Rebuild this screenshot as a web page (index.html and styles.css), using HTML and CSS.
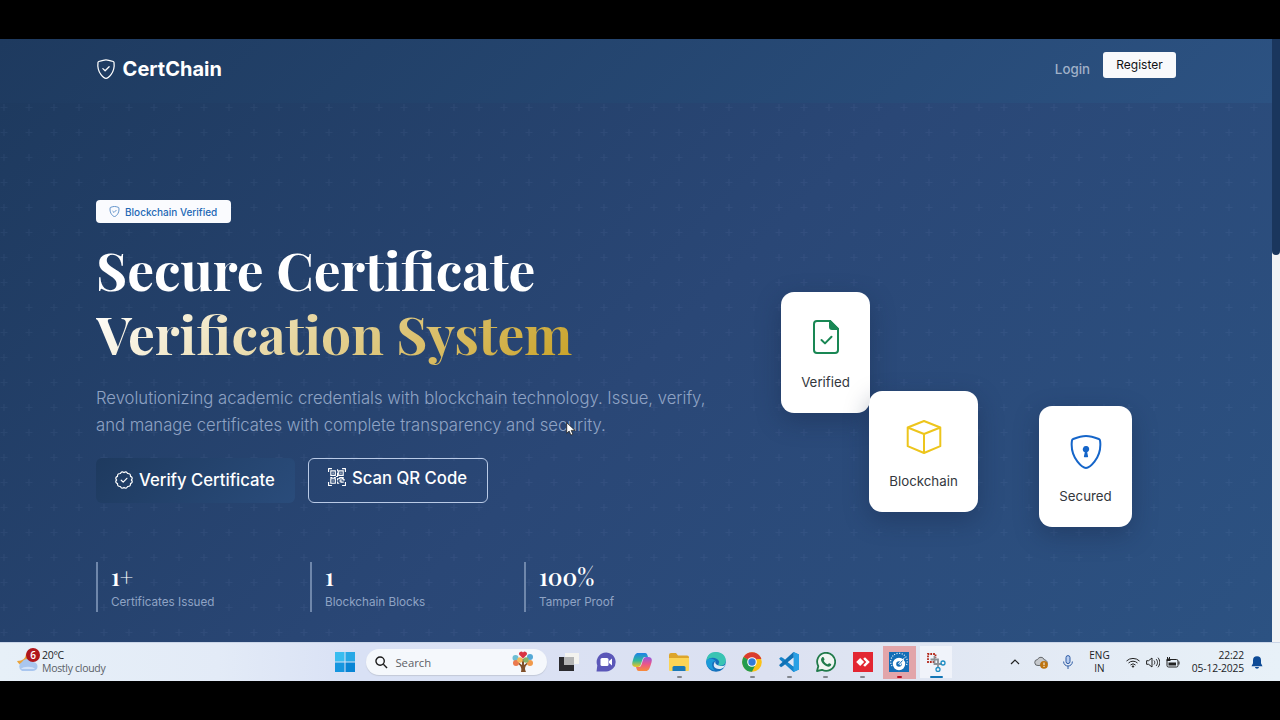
FILE: index.html
```
<!DOCTYPE html>
<html lang="en">
  <head>
    <meta charset="UTF-8" />
    <meta name="viewport" content="width=device-width, initial-scale=1.0" />
    <title>CertChain</title>
    <link rel="stylesheet" href="styles.css" />
  </head>
  <body>
    <svg class="defs" width="0" height="0">
      <defs>
        <symbol id="shield-check" viewBox="0 0 16 16">
          <path d="M8 .6C6.7.6 4 1.4 2.2 2 1.900 2.100 1.700 2.300 1.600 2.700 1 7.200 2.400 10.400 4 12.500c1.400 1.800 3.200 2.900 4 2.900s2.600-1.100 4-2.900c1.600-2.100 3-5.300 2.400-9.800-.1-.4-.3-.6-.6-.7C12 1.400 9.300.6 8 .6z" fill="none" stroke="currentColor" />
          <path d="M5.500 7.700l1.800 1.700 3.200-3.200" fill="none" stroke="currentColor" stroke-linecap="round" stroke-linejoin="round" />
        </symbol>
      </defs>
    </svg>

    <div class="screen">
      <div class="viewport">
        <div class="page">
          <nav class="navbar">
            <div class="brand">
              <svg><use href="#shield-check" /></svg>
              <span>CertChain</span>
            </div>
            <div class="nav-links">
              <a class="login">Login</a>
              <a class="register">Register</a>
            </div>
          </nav>

          <main class="hero">
            <section class="hero-text">
              <div class="badge">
                <svg><use href="#shield-check" /></svg>
                <span>Blockchain Verified</span>
              </div>
              <h1>
                <span class="line">Secure Certificate</span>
                <span class="line gold">Verification System</span>
              </h1>
              <p class="lead">
                Revolutionizing academic credentials with blockchain technology. Issue, verify,<br />
                and manage certificates with complete transparency and security.
              </p>
              <div class="buttons">
                <a class="btn btn-verify">
                  <svg viewBox="0 0 18 18" fill="none" stroke="currentColor" stroke-width="1.2" stroke-linecap="round" stroke-linejoin="round">
                    <path d="M9 1.600Q11.300-.4 12.600 2.500 15.700 2.300 15.500 5.400 18.400 6.700 16.400 9 18.400 11.300 15.500 12.600 15.700 15.700 12.600 15.500 11.300 18.400 9 16.400 6.700 18.400 5.400 15.500 2.300 15.700 2.500 12.600-.4 11.300 1.600 9-.4 6.700 2.500 5.400 2.300 2.300 5.400 2.500 6.700-.4 9 1.600z" />
                    <path d="M6.200 9.200l2 1.900 3.700-3.800" />
                  </svg>
                  <span>Verify Certificate</span>
                </a>
                <a class="btn btn-scan">
                  <svg viewBox="0 0 16 16" fill="currentColor">
                    <path d="M0 .5A.5.5 0 0 1 .5 0h3v1H1v2.500H0zM12.500 0h3a.5.5 0 0 1 .5.5v3h-1V1h-2.500zM0 12.500h1V15h2.500v1h-3a.5.5 0 0 1-.5-.5zM15 12.500h1v3a.5.5 0 0 1-.5.5h-3v-1H15z" />
                    <path fill-rule="evenodd" d="M2 2h5v5H2zm1 1v3h3V3zM9 2h5v5H9zm1 1v3h3V3zM2 9h5v5H2zm1 1v3h3v-3z" />
                    <path d="M4 4h1v1H4zM11 4h1v1h-1zM4 11h1v1H4zM8 1h1v2H8zM8 4h1v4H7V7h1zM2 8h2v1H2zM5 8h2v1H5zM8 9h2V8h1v2H9v1H8zM12 8h2v2h-2V9h-1V8zM11 10h1v2h2v1h-3v-1h-1v-1h1zM8 12h1v1h1v1H8zM13 10h2v1h-2z" />
                  </svg>
                  <span>Scan QR Code</span>
                </a>
              </div>
              <div class="stats">
                <div class="stat"><strong>1+</strong><span>Certificates Issued</span></div>
                <div class="stat"><strong>1</strong><span>Blockchain Blocks</span></div>
                <div class="stat"><strong>100%</strong><span>Tamper Proof</span></div>
              </div>
            </section>

            <section class="hero-visual">
              <div class="card card-verified">
                <svg viewBox="0 0 32 34" fill="none" stroke="#198754" stroke-width="2" stroke-linecap="round" stroke-linejoin="round">
                  <path d="M20 1H7a3 3 0 0 0-3 3v26a3 3 0 0 0 3 3h18a3 3 0 0 0 3-3V9z" />
                  <path d="M20 1v6a2 2 0 0 0 2 2h6z" fill="#198754" />
                  <path d="M11.500 20l3.500 3.400 6.500-6.600" />
                </svg>
                <span>Verified</span>
              </div>
              <div class="card card-blockchain">
                <svg viewBox="0 0 36 34" fill="none" stroke="#edc51c" stroke-width="2" stroke-linejoin="round">
                  <path d="M18 1l16.300 6.500v18.700L18 33 1.700 26.200V7.500zM1.700 7.500L18 14l16.300-6.500M18 14v19" />
                </svg>
                <span>Blockchain</span>
              </div>
              <div class="card card-secured">
                <svg viewBox="0 0 32 34">
                  <path d="M16 1C12.500 1 6.500 2.700 3.200 4 2.400 4.300 2 5 1.900 5.800.8 14.800 3.800 22 7.500 26.700 10.500 30.500 14.300 33 16 33s5.500-2.500 8.500-6.300C28.200 22 31.200 14.800 30.100 5.800 30 5 29.600 4.300 28.800 4 25.500 2.700 19.500 1 16 1z" fill="none" stroke="#1565c9" stroke-width="2" />
                  <path d="M19.200 14.200a3.200 3.200 0 1 0-4.400 3l-.9 4.300c-.1.500.2.800.6.800h3c.4 0 .7-.3.6-.8l-.9-4.300a3.200 3.200 0 0 0 2-3z" fill="#1565c9" />
                </svg>
                <span>Secured</span>
              </div>
            </section>
          </main>
        </div>
        <div class="scrollbar"><div class="thumb"></div></div>
      </div>

      <footer class="taskbar">
        <div class="weather">
          <svg class="weather-icon" viewBox="0 0 26 26">
            <path d="M10 5c0 5-3 8-9 8 2 5 9 6 12 1l3-5z" fill="#eaa43c" />
            <path d="M6 23a5 5 0 0 1 0-9c2-4 9-4 11 0 6 0 6 9 0 9z" fill="#a9c6ef" />
            <path d="M5 21h14c-2-3-12-3-14 0z" fill="#d3e3fa" />
            <circle cx="17" cy="7" r="7" fill="#b0161b" />
            <text x="17" y="10.800" text-anchor="middle">6</text>
          </svg>
          <div class="weather-text"><span>20°C</span><small>Mostly cloudy</small></div>
        </div>

        <div class="apps">
          <div class="app">
            <svg viewBox="0 0 20 20"><path d="M0 0h9.500v9.500H0z" fill="#39bdf0" /><path d="M10.500 0H20v9.500h-9.500z" fill="#27a8e6" /><path d="M0 10.500h9.500V20H0z" fill="#1696df" /><path d="M10.500 10.500H20V20h-9.500z" fill="#0885d5" /></svg>
          </div>
          <div class="search">
            <svg class="lens" viewBox="0 0 14 14"><circle cx="5.500" cy="5.500" r="4.500" /><path d="M9 9l4 4" /></svg>
            <span>Search</span>
            <svg class="tree" viewBox="0 0 22 22">
              <path d="M9 21c1-4 0-6-4-9l1-1 4 3V8h2v6l4-3 1 1c-4 3-5 5-3 9z" fill="#80502b" />
              <circle cx="3.500" cy="7" r="3" fill="#6dbed3" /><circle cx="18" cy="6" r="3" fill="#54a9d6" />
              <circle cx="4" cy="12" r="3" fill="#eb7a4e" /><circle cx="18" cy="12" r="3" fill="#f19a4b" />
              <circle cx="8" cy="9" r="2.800" fill="#f5ba5a" /><circle cx="14" cy="9" r="2.800" fill="#87b36a" />
              <path d="M11 7.500L7.500 4A2 2 0 0 1 11 1.500 2 2 0 0 1 14.500 4z" fill="#d93343" />
            </svg>
          </div>
          <div class="app">
            <svg viewBox="0 0 20 20"><path d="M6 1h14v11H6z" fill="#f3f3ef" /><path d="M0 5h15v14H0z" fill="#2b2b2e" /><path d="M5 5h10v8H5z" fill="#b3b4b4" /></svg>
          </div>
          <div class="app">
            <svg viewBox="0 0 20 20"><path d="M.5 19.500l.8-6A9.500 9.500 0 1 1 10 19.500z" fill="#5b57b8" /><rect x="4.500" y="6" width="8" height="8" rx="1.500" fill="#fff" /><path d="M13 9l3-2.500v7L13 11z" fill="#fff" /></svg>
          </div>
          <div class="app">
            <svg viewBox="0 0 20 20">
              <defs>
                <linearGradient id="cop1" x1="0" y1="0" x2="0" y2="1"><stop stop-color="#1c82e8" /><stop offset=".55" stop-color="#31b99a" /><stop offset="1" stop-color="#f3c520" /></linearGradient>
                <linearGradient id="cop2" x1="0" y1="0" x2="0" y2="1"><stop stop-color="#8e58e2" /><stop offset=".5" stop-color="#eb558b" /><stop offset="1" stop-color="#f78c38" /></linearGradient>
              </defs>
              <path d="M6 1h7c2 0 2 1 3 4h-3c-2 0-2 1-4 7-1 3-2 3-5 3-5 0-4-4-3-7C2.500 3 3.500 1 6 1z" fill="url(#cop1)" />
              <path d="M14 19H7c-2 0-2-1-3-4h3c2 0 2-1 4-7 1-3 2-3 5-3 5 0 4 4 3 7-1.500 5-2.500 7-5 7z" fill="url(#cop2)" />
            </svg>
          </div>
          <div class="app open">
            <svg viewBox="0 0 20 20"><path d="M0 3a2 2 0 0 1 2-2h5l2 2.500h9a2 2 0 0 1 2 2V18H0z" fill="#dda52b" /><path d="M0 6h20v12a1 1 0 0 1-1 1H1a1 1 0 0 1-1-1z" fill="#fbd456" /><path d="M3.500 19v-3.500a1.500 1.500 0 0 1 1.500-1.500h10a1.500 1.500 0 0 1 1.500 1.500V19z" fill="#1979b8" /></svg>
          </div>
          <div class="app">
            <svg viewBox="0 0 20 20">
              <circle cx="10" cy="10" r="9.800" fill="#1670bc" />
              <path d="M.3 9C1 3 5-.2 10 .1c6 .2 10 4 9.800 8.900-.2 4-4 5.500-7 4.400-1.500-.6 1-2 .2-4.200C11 4.500 3 4.500.3 9z" fill="#39c4b3" />
              <path d="M12.800 13.400c3 1.200 5.500.5 6.500-1-.3 2.800-3.500 4.800-6.300 4.600C8 16.700 6 13 9.500 9c-1 3 1.200 3.800 3.300 4.400z" fill="#dceaf5" />
              <path d="M.3 9C2 5.500 7 5.500 9.500 9 5 9 5 15 9 18.500 3 17.500 0 14 .3 9z" fill="#1a9bd9" />
            </svg>
          </div>
          <div class="app open">
            <svg viewBox="0 0 20 20"><circle cx="10" cy="10" r="9.800" fill="#fbc116" /><path d="M10 10L1.500 5.100A9.800 9.800 0 0 1 18.500 5.100z" fill="#da3b2f" /><path d="M1.500 5.100A9.800 9.800 0 0 0 10 19.800L13.800 12 10 10z" fill="#249b4c" /><path d="M10 5.100h8.500a9.800 9.800 0 0 1 .8 1.900H10z" fill="#da3b2f" /><circle cx="10" cy="10" r="4.800" fill="#fff" /><circle cx="10" cy="10" r="3.700" fill="#337bd9" /></svg>
          </div>
          <div class="app open">
            <svg viewBox="0 0 20 20"><path d="M14.500 0L20 2.500v15L14.500 20 1 7.800.2 6.500 2 5l2 1 10.500 8.500z" fill="#1684cb" /><path d="M14.500 0L20 2.500V17.500L14.500 20z" fill="#29a0e5" /><path d="M14.500 5.500v9L8.700 10z" fill="#dfe6f5" /><path d="M14.500 0v5.500L4 14l-2 1.200L.2 13.500l.8-1.300z" fill="#1071b5" /></svg>
          </div>
          <div class="app open">
            <svg viewBox="0 0 20 20"><path d="M1 19l1.300-4.800A9 9 0 1 1 6 17.800z" fill="#f0f5f2" stroke="#207a4a" stroke-width="1.800" stroke-linejoin="round" /><path d="M6 5.500c.6-.7 1.500-.6 1.800.1l.7 1.600c.2.600-.8 1.300-.8 1.600 1 2 2.200 2.800 3.900 3.500.4 0 1.100-1.300 1.600-1.100l1.800.9c.8.400-.3 2.200-1.400 2.500C10.500 15.500 5 11 5 7.500c0-.8.500-1.500 1-2z" fill="#207a4a" /></svg>
          </div>
          <div class="app open">
            <svg viewBox="0 0 20 20"><path d="M0 0h20v20H0z" fill="#e32632" /><path d="M7.200 6l4 4-4 4-4-4z" fill="#fff" /><path d="M10.200 6.800L12 5.200 16.800 10 12 14.800l-1.800-1.600L13.300 10z" fill="#fff" /></svg>
          </div>
          <div class="app open alert">
            <svg viewBox="0 0 20 20"><path d="M0 0h20v20H0z" fill="#136eb7" /><path d="M3 14A8.300 8.300 0 1 1 17 14" fill="none" stroke="#fff" stroke-width="1.200" stroke-dasharray="1 1.500" /><circle cx="10" cy="12" r="4.500" fill="none" stroke="#fff" stroke-width="3.400" /><path d="M9 11.500l7-6.500-4.500 8.500z" fill="#fff" /><path d="M10 12.500l3.500-4" stroke="#136eb7" /></svg>
          </div>
          <div class="app open active">
            <svg viewBox="0 0 20 20"><path d="M8.500 10H2V2h7.500v4" fill="none" stroke="#b42a1c" stroke-width="1.800" stroke-dasharray="1.800 1" /><path d="M4.500 7.500h7.500V16M8.500 4v8H16" fill="none" stroke="#8c9196" stroke-width="1.800" /><circle cx="17" cy="11" r="2" fill="none" stroke="#1b8dc4" stroke-width="1.300" /><circle cx="12" cy="17.500" r="2" fill="none" stroke="#1b8dc4" stroke-width="1.300" /></svg>
          </div>
        </div>

        <div class="tray">
          <svg class="chevron" viewBox="0 0 10 6"><path d="M1 5l4-4 4 4" fill="none" stroke="#222" stroke-width="1.200" /></svg>
          <svg class="cloud" viewBox="0 0 15 13"><path d="M4 9.500a3 3 0 0 1-.5-6C5 .5 9 .5 10.500 4 13 4 14 7 12.500 9z" fill="#c5c8cc" stroke="#62666a" /><circle cx="10" cy="8.800" r="3.900" fill="#bd7410" /><path d="M10 6.500v2.700M10 10v1" stroke="#fff" /></svg>
          <svg class="mic" viewBox="0 0 10 14"><rect x="3" y=".6" width="4" height="8" rx="2" fill="#b8cdf0" stroke="#2d5ba4" /><path d="M.6 6.500c0 6 8.800 6 8.800 0M5 11v3" fill="none" stroke="#2d5ba4" /></svg>
          <div class="lang">ENG<br />IN</div>
          <svg class="wifi" viewBox="0 0 14 11" fill="none" stroke="#222"><path d="M.5 4a9.500 9.500 0 0 1 13 0M2.500 6a6.500 6.500 0 0 1 9 0M4.500 8a3.600 3.600 0 0 1 5 0" /><circle cx="7" cy="9.500" r=".7" fill="#222" /></svg>
          <svg class="volume" viewBox="0 0 14 11" fill="none" stroke="#222"><path d="M.6 3.700h2L6 1v9L2.600 7.300h-2zM8 3.500c1 1 1 3 0 4M10 2c2 2 2 5 0 7M12 .7c2.300 2.800 2.300 6.800 0 9.600" /></svg>
          <svg class="battery" viewBox="0 0 14 11"><rect x="1" y="2.500" width="11" height="7.500" rx="1.500" fill="none" stroke="#222" /><path d="M2.500 5.500h7.500V8.500H2.500zM12.500 4.500h1v3h-1zM1 0h1v1.500h1V0h1v2h.5v2H.5V2H1z" fill="#222" /></svg>
          <div class="clock">22:22<br />05-12-2025</div>
          <svg class="bell" viewBox="0 0 12 13"><path d="M6 .3a4 4 0 0 1 4 4v3l1.500 3H.5L2 7.300v-3a4 4 0 0 1 4-4zM4 11h4c-.3 2.200-3.700 2.200-4 0z" fill="#0d4a96" /></svg>
        </div>
      </footer>
    </div>

    <svg class="cursor" viewBox="0 0 10 14"><path d="M.7.7v10.600l2.500-2.200 1.700 4 2-.9-1.700-3.800H9z" fill="#fff" stroke="#222" stroke-width=".8" /></svg>
  </body>
</html>
```
FILE: styles.css
```
* {
  box-sizing: border-box;
}
body {
  margin: 0;
  width: 1280px;
  height: 720px;
  overflow: hidden;
  background: #000;
  font-family: Inter, "Liberation Sans", sans-serif;
}
svg {
  display: block;
  flex-shrink: 0;
}
.defs {
  position: absolute;
}
.screen {
  padding-top: 39px;
}
.viewport {
  display: flex;
  height: 603px;
}
.page {
  width: 1272px;
  display: flex;
  flex-direction: column;
  color: #fff;
}
.scrollbar {
  width: 8px;
  background: #f1f3f5;
}
.thumb {
  height: 216px;
  background: #1a365d;
  border-radius: 0 0 4px 4px;
}

/* navbar */
.navbar {
  height: 64px;
  padding: 0 96px;
  display: flex;
  justify-content: space-between;
  align-items: flex-start;
  background: linear-gradient(135deg, #1e3a5f 0%, #2c5282 100%);
}
.brand {
  display: flex;
  align-items: center;
  gap: 6.6px;
  padding-top: 18px;
  font-size: 20px;
  line-height: 24px;
  font-weight: 700;
}
.brand svg {
  width: 20px;
  height: 20px;
}
.nav-links {
  display: flex;
  align-items: flex-start;
  gap: 13px;
}
.login {
  padding-top: 20px;
  font-size: 13.3px;
  line-height: 20px;
  font-weight: 500;
  color: #a0b1c8;
}
.register {
  width: 73px;
  height: 26px;
  margin-top: 13px;
  border-radius: 3px;
  background: #f8f9fb;
  color: #101114;
  font-size: 12px;
  line-height: 25px;
  font-weight: 400;
  text-align: center;
}

/* hero */
.hero {
  flex: 1;
  display: flex;
  padding: 97px 96px 0;
  background-image:
    url("data:image/svg+xml,%3Csvg xmlns='http://www.w3.org/2000/svg' width='25' height='25'%3E%3Cpath d='M4 1v7M.5 4.500h7' stroke='%23b8d0ff' stroke-opacity='.055' stroke-width='1.200'/%3E%3C/svg%3E"),
    linear-gradient(135deg, #1e3a5f 0%, #2a4776 50%, #2c5282 100%);
}
.hero-text {
  width: 642px;
}
.badge {
  display: flex;
  align-items: center;
  gap: 5px;
  width: 135px;
  height: 23px;
  padding: 0 0 0 13px;
  border-radius: 4px;
  background: #fafbfe;
  color: #2268b5;
  font-size: 10px;
  font-weight: 500;
  white-space: nowrap;
}
.badge svg {
  width: 11px;
  height: 11px;
}
h1 {
  margin: 14px 0 0;
  font-family: "Playfair Display", "Liberation Serif", serif;
  font-size: 53.3px;
  line-height: 64px;
  font-weight: 700;
}
.line {
  display: block;
  width: max-content;
}
.gold {
  background: linear-gradient(135deg, #fff 0%, #c9a227 100%);
  -webkit-background-clip: text;
  background-clip: text;
  color: transparent;
}
.lead {
  margin: 20px 0 0;
  font-size: 16.67px;
  line-height: 26.7px;
  font-weight: 300;
  color: #8fa3c4;
  white-space: nowrap;
}
.buttons {
  display: flex;
  gap: 13px;
  margin-top: 20px;
}
.btn {
  display: flex;
  height: 45px;
  border-radius: 6px;
  font-size: 16.7px;
  line-height: 24px;
  font-weight: 500;
  white-space: nowrap;
}
.btn svg {
  width: 18px;
  height: 18px;
}
.btn-verify {
  width: 199px;
  padding: 10px 0 0 19px;
  gap: 6px;
  background: linear-gradient(135deg, #1e3a5f, #2a4c7b);
}
.btn-verify svg {
  margin-top: 3px;
}
.btn-scan {
  width: 180px;
  padding: 7px 0 0 19px;
  gap: 6px;
  border: 1px solid #b9cae6;
}
.btn-scan svg {
  margin-top: 2px;
}
.stats {
  display: grid;
  grid-template-columns: repeat(3, 214px);
  margin-top: 59px;
}
.stat {
  height: 50px;
  padding: 3px 0 0 13px;
  border-left: 2px solid #6f87ab;
  font-size: 11.7px;
  color: #8fa3c4;
}
.stat strong {
  display: block;
  height: 29px;
  font-family: "Playfair Display", "Liberation Serif", serif;
  font-size: 23.3px;
  line-height: 24px;
  font-weight: 600;
  color: #fff;
}
.stat span {
  display: block;
  line-height: 17px;
}

/* floating cards */
.hero-visual {
  position: relative;
  flex: 1;
}
.card {
  position: absolute;
  height: 121px;
  padding-top: 29px;
  display: flex;
  flex-direction: column;
  align-items: center;
  gap: 17px;
  border-radius: 13px;
  background: #fff;
  color: #33373d;
  font-size: 13.3px;
  line-height: 20px;
  box-shadow: 0 8px 24px rgba(20, 35, 65, 0.35);
}
.card svg {
  height: 34px;
}
.card-verified {
  left: 43px;
  top: 92px;
  width: 89px;
}
.card-verified svg {
  margin: -1px 0 1px;
}
.card-blockchain {
  left: 131px;
  top: 191px;
  width: 109px;
}
.card-secured {
  left: 301px;
  top: 206px;
  width: 93px;
}

/* taskbar */
.taskbar {
  height: 39px;
  display: flex;
  align-items: center;
  border-top: 1px solid #cbd6e8;
  background: linear-gradient(90deg, #e7f0f8 0%, #e3ebf7 17%, #d9e1f5 28%, #dce1f1 60%, #e2e9f4 78%, #e8f1f8 100%);
  font-family: "Open Sans", "Noto Sans", sans-serif;
  color: #202326;
}
.weather {
  width: 327px;
  display: flex;
  padding-left: 16px;
}
.weather-icon {
  width: 26px;
  height: 26px;
  margin-top: -1px;
}
.weather-icon text {
  font-size: 10px;
  font-weight: 600;
  fill: #fff;
}
.weather-text {
  display: flex;
  flex-direction: column;
  font-size: 10.5px;
  line-height: 13px;
}
.weather-text span {
  letter-spacing: -0.3px;
}
.weather-text small {
  font-size: 10.5px;
  letter-spacing: -0.3px;
  color: #5a6066;
}
.apps {
  display: flex;
  align-items: center;
}
.app {
  width: 36.7px;
  height: 38px;
  display: flex;
  align-items: center;
  justify-content: center;
  position: relative;
}
.app svg {
  width: 20px;
  height: 20px;
}
.app.open::after {
  content: "";
  position: absolute;
  bottom: 3px;
  left: 16px;
  width: 5px;
  height: 2px;
  border-radius: 1px;
  background: #82868e;
}
.alert {
  background: linear-gradient(#e2a5aa, #e2a5aa) center / 33px 33px no-repeat;
}
.app.alert::after {
  background: #b80d20;
}
.active {
  background: linear-gradient(#f0f3fa, #f0f3fa) center / 32px 32px no-repeat;
}
.app.active::after {
  left: 12px;
  width: 13px;
  background: #1275b5;
}
.search {
  width: 181px;
  height: 26px;
  margin: 0 3.3px 0 2.7px;
  padding: 0 13px 0 9px;
  display: flex;
  align-items: center;
  border-radius: 13px;
  background: #f5f8fc;
  box-shadow: 0 1px 1px #c2c9d8;
  font-size: 11.3px;
  color: #5c6066;
}
.search span {
  margin-left: 7px;
  flex: 1;
}
.lens {
  width: 13px;
  height: 13px;
  fill: none;
  stroke: #1b1b1b;
  stroke-width: 1.5;
}
.tree {
  width: 22px;
  height: 22px;
}
.tray {
  flex: 1;
  display: flex;
  align-items: center;
  justify-content: flex-end;
  padding-right: 17px;
  font-size: 10px;
  line-height: 13px;
}
.chevron {
  width: 10px;
  height: 6px;
  margin-right: 14px;
}
.cloud {
  width: 15px;
  height: 13px;
  margin-right: 14px;
}
.mic {
  width: 10px;
  height: 14px;
}
.lang {
  width: 53px;
  text-align: center;
}
.wifi,
.volume,
.battery {
  width: 14px;
  height: 11px;
  margin-right: 6px;
}
.clock {
  width: 58px;
  font-size: 10.3px;
  letter-spacing: -0.15px;
  display: flex;
  justify-content: flex-end;
  text-align: right;
  white-space: nowrap;
  margin-right: 7px;
}
.bell {
  width: 12px;
  height: 13px;
}

.cursor {
  position: absolute;
  left: 566px;
  top: 422px;
  width: 10px;
  height: 14px;
}
```
